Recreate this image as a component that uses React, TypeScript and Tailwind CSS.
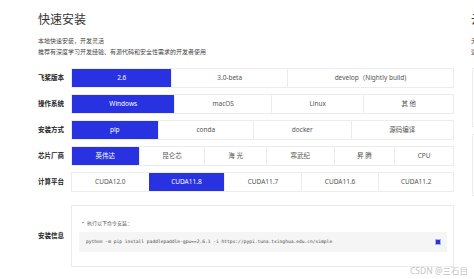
import React from "react";

type Opt = { label: string; w: number; active?: boolean };

const rows: { title: string; opts: Opt[] }[] = [
  {
    title: "飞桨版本",
    opts: [
      { label: "2.6", w: 100, active: true },
      { label: "3.0-beta", w: 116 },
      { label: "develop（Nightly build)", w: 167 },
    ],
  },
  {
    title: "操作系统",
    opts: [
      { label: "Windows", w: 103, active: true },
      { label: "macOS", w: 97 },
      { label: "Linux", w: 93 },
      { label: "其 他", w: 90 },
    ],
  },
  {
    title: "安装方式",
    opts: [
      { label: "pip", w: 86, active: true },
      { label: "conda", w: 96 },
      { label: "docker", w: 98 },
      { label: "源码编译", w: 103 },
    ],
  },
  {
    title: "芯片厂商",
    opts: [
      { label: "英伟达", w: 67, active: true },
      { label: "昆仑芯", w: 66 },
      { label: "海 光", w: 62 },
      { label: "寒武纪", w: 68 },
      { label: "昇 腾", w: 61 },
      { label: "CPU", w: 59 },
    ],
  },
  {
    title: "计算平台",
    opts: [
      { label: "CUDA12.0", w: 77 },
      { label: "CUDA11.8", w: 76, active: true },
      { label: "CUDA11.7", w: 77 },
      { label: "CUDA11.6", w: 78 },
      { label: "CUDA11.2", w: 75 },
    ],
  },
];

export default function App() {
  return (
    <div
      className="relative w-[474px] h-[279px] overflow-hidden bg-white flex"
      style={{ fontFamily: '"Noto Sans", "Noto Sans CJK SC", sans-serif' }}
    >
      <div className="w-[470px] shrink-0 pl-[38px] pt-[11px]">
        <div className="text-[12px] leading-[18px] text-[#333]">快速安装</div>
        <div className="mt-[7px] text-[6px] leading-[11px] text-[#444]">本地快速安装，开发灵活</div>
        <div className="text-[6px] leading-[11px] text-[#444]">
          推荐有深度学习开发经验、有源代码和安全性需求的开发者使用
        </div>
        <div className="mt-[10px] flex flex-col gap-[6px]">
          {rows.map((r) => (
            <div key={r.title} className="flex items-center h-[20px]">
              <div className="w-[26px] text-right text-[6.5px] font-bold text-[#222] whitespace-nowrap">
                {r.title}
              </div>
              <div className="ml-[7px] flex w-[383px] h-[20px] border border-[#ececec]">
                {r.opts.map((o, i) => (
                  <div
                    key={o.label}
                    style={{ width: o.w }}
                    className={
                      o.active
                        ? "flex items-center justify-center bg-[#2932e1] text-white text-[6.5px] whitespace-nowrap"
                        : i === 0
                        ? "flex items-center justify-center text-[#555] text-[6.5px] whitespace-nowrap"
                        : "flex items-center justify-center border-l border-[#ececec] text-[#555] text-[6.5px] whitespace-nowrap"
                    }
                  >
                    {o.label}
                  </div>
                ))}
              </div>
            </div>
          ))}
        </div>
        <div className="mt-[13px] flex items-center">
          <div className="w-[26px] text-right text-[6.5px] font-bold text-[#222] whitespace-nowrap">安装信息</div>
          <div className="ml-[7px] w-[383px] h-[62px] border border-[#ececec] pl-[7px] pr-[6px] pt-[13px]">
            <div className="flex items-center text-[5px] leading-[8px] text-[#555] pl-[3px]">
              <span className="mr-[3px] text-[5px]">•</span>执行以下命令安装：
            </div>
            <div className="mt-[5px] h-[20px] bg-[#f5f5f5] flex items-center justify-between pl-[7px] pr-[7px]">
              <span
                className="text-[4.6px] text-[#444] whitespace-nowrap"
                style={{ fontFamily: '"DejaVu Sans Mono", monospace' }}
              >
                python -m pip install paddlepaddle-gpu==2.6.1 -i https://pypi.tuna.tsinghua.edu.cn/simple
              </span>
              <span className="w-[4px] h-[4px] bg-[#2932e1] outline outline-1 outline-[#aab0f0]" />
            </div>
          </div>
        </div>
      </div>
      <div className="w-[120px] shrink-0 pt-[11px] pl-[1px]">
        <div className="text-[12px] leading-[18px] text-[#333] whitespace-nowrap">云端体验</div>
        <div className="mt-[7px] text-[6px] leading-[11px] text-[#444] whitespace-nowrap">无需安装，开箱即用</div>
        <div className="text-[6px] leading-[11px] text-[#444] whitespace-nowrap">适合初学者</div>
        <div className="mt-[10px] ml-[1px] h-[59px] border border-[#ececec]" />
        <div className="mt-[7px] ml-[1px] h-[62px] border border-[#ececec]" />
      </div>
      <div className="absolute left-[410px] top-[265px] text-[8.5px] leading-[12px] text-[#c4c4c4] whitespace-nowrap">
        CSDN @三石目
      </div>
    </div>
  );
}
